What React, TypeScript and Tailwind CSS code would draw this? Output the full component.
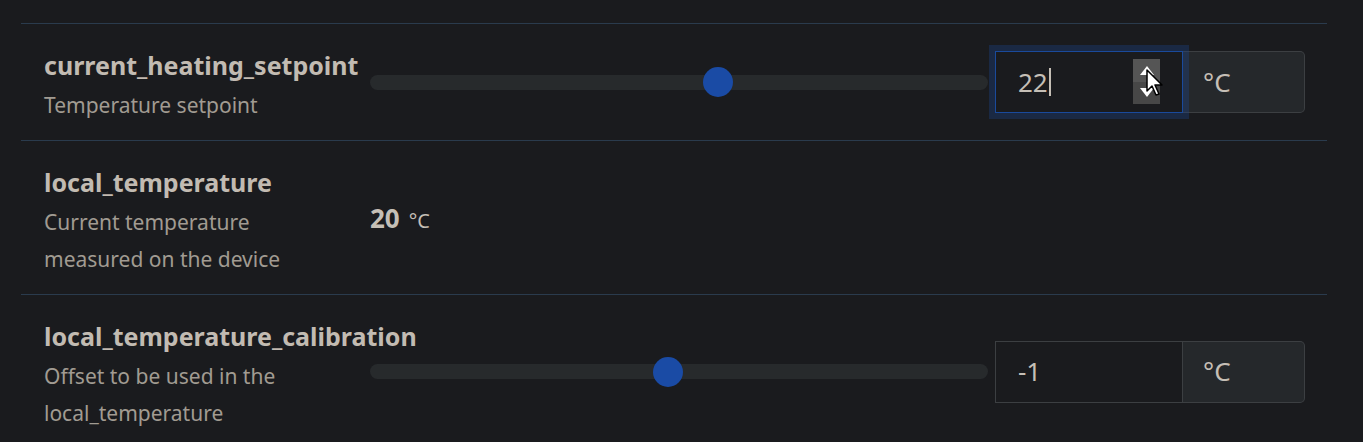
import React from 'react';

interface SliderProps {
  fraction: number;
}

const Slider: React.FC<SliderProps> = ({ fraction }) => (
  <div className="relative flex-1 h-[30px] flex items-center">
    <div className="w-full h-[15px] rounded-full bg-[#272a2c]"></div>
    <div
      className="absolute top-0 h-[30px] w-[30px] rounded-full bg-[#1a4ba5]"
      style={{ left: `calc(${fraction * 100}% - ${fraction * 30}px)` }}
    ></div>
  </div>
);

interface NumberInputProps {
  value: string;
  focused?: boolean;
}

const NumberInput: React.FC<NumberInputProps> = ({ value, focused }) => (
  <div className="flex h-[62px] w-[310px] shrink-0">
    <div
      className={`relative z-10 flex w-[188px] items-center border pl-[22px] text-[26px] text-[#c5bfb6] ${
        focused ? 'border-[#1a4a9c] shadow-[0_0_0_6px_rgba(28,72,150,0.32)]' : 'border-[#3c3f42] bg-[#1a1b1e]'
      }`}
    >
      <span>{value}</span>
      {focused && <span className="ml-[1px] h-[28px] w-[2px] bg-[#c5bfb6]"></span>}
      {focused && (
        <>
          <div className="absolute right-[22px] top-[7px] flex h-[45px] w-[27px] flex-col">
            <div className="flex flex-1 items-center justify-center bg-[#555555]">
              <div className="h-0 w-0 border-x-[7px] border-b-[9px] border-x-transparent border-b-white"></div>
            </div>
            <div className="flex flex-1 items-center justify-center bg-[#474747]">
              <div className="h-0 w-0 border-x-[7px] border-t-[9px] border-x-transparent border-t-white"></div>
            </div>
          </div>
          <svg className="absolute left-[150px] top-[17px]" width="20" height="30" viewBox="0 0 20 30">
            <path d="M1 1 L1 22 L6 17 L10 26 L13 25 L9 16 L16 16 Z" fill="white" stroke="black" strokeWidth="1.5" strokeLinejoin="round" />
          </svg>
        </>
      )}
    </div>
    <div className="flex flex-1 items-center rounded-r-[5px] border border-l-0 border-[#3c3f42] bg-[#25282b] pl-[20px] text-[26px] text-[#c5bfb6]">
      °C
    </div>
  </div>
);

interface RowProps {
  title: string;
  description: string;
  children: React.ReactNode;
}

const Row: React.FC<RowProps> = ({ title, description, children }) => (
  <div className="flex items-center border-t border-[#2a3b4d] pl-[23px] pr-[22px] pt-[25px] pb-[16px]">
    <div className="w-[326px] shrink-0 self-start">
      <div className="text-[25px] font-bold leading-[32px] text-[#c2bbb2] whitespace-nowrap">{title}</div>
      <div className="mt-[6px] max-w-[280px] text-[21px] leading-[37px] text-[#a19b92]">{description}</div>
    </div>
    <div className="flex flex-1 items-center gap-[7px] -mt-[9px]">{children}</div>
  </div>
);

export default function App() {
  return (
    <div className="min-h-[442px] w-full bg-[#1a1b1e] pl-[21px] pr-[36px] pt-[23px] overflow-hidden" style={{ fontFamily: '"Noto Sans", "Open Sans", sans-serif' }}>
      <Row title="current_heating_setpoint" description="Temperature setpoint">
        <Slider fraction={0.566} />
        <NumberInput value="22" focused />
      </Row>
      <Row title="local_temperature" description="Current temperature measured on the device">
        <div className="mt-[2px] flex items-baseline gap-[9px] text-[#c5bfb6]">
          <span className="text-[26px] font-bold">20</span>
          <span className="text-[20px]">°C</span>
        </div>
      </Row>
      <Row title="local_temperature_calibration" description="Offset to be used in the local_temperature">
        <Slider fraction={0.481} />
        <NumberInput value="-1" />
      </Row>
    </div>
  );
}
